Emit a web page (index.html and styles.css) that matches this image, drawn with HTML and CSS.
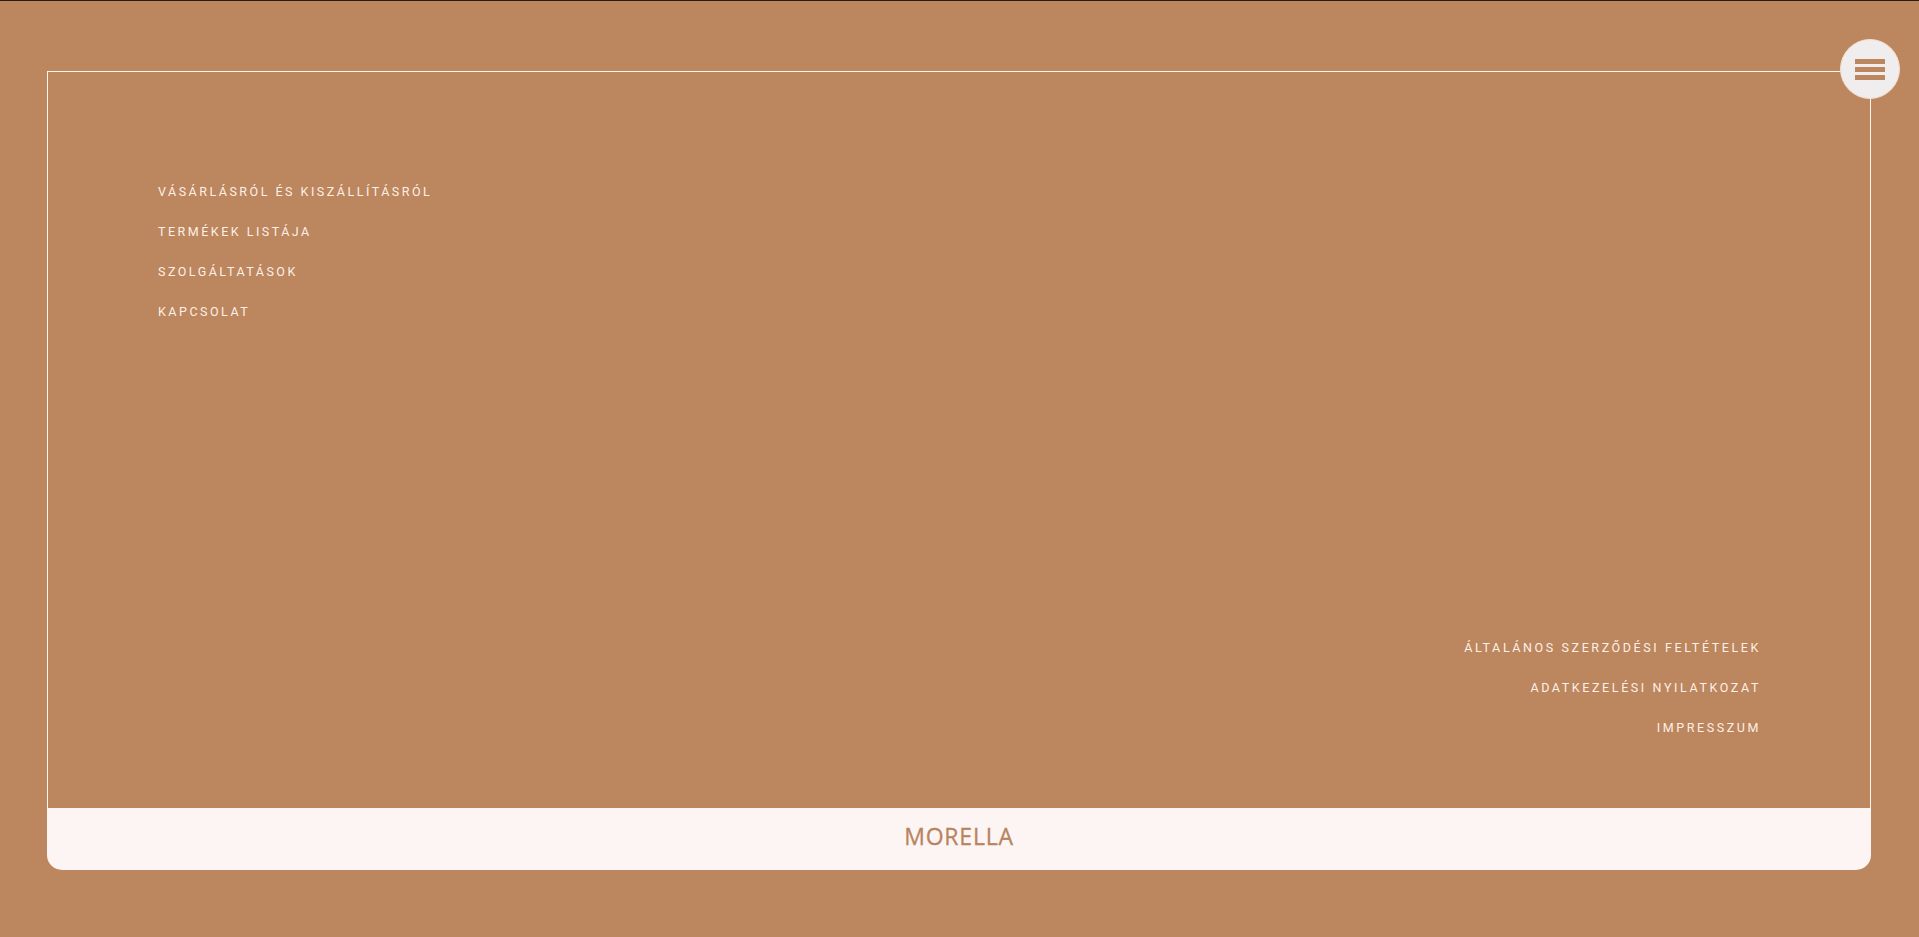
FILE: index.html
```html
<!DOCTYPE html>
<html lang="hu">
<head>
<meta charset="utf-8">
<title>Morella</title>
<link rel="stylesheet" href="styles.css">
</head>
<body>
<div class="page">
  <div class="frame">
    <div class="frame-inner">
      <nav class="menu">
        <a href="#">VÁSÁRLÁSRÓL ÉS KISZÁLLÍTÁSRÓL</a>
        <a href="#">TERMÉKEK LISTÁJA</a>
        <a href="#">SZOLGÁLTATÁSOK</a>
        <a href="#">KAPCSOLAT</a>
      </nav>
      <nav class="legal">
        <a href="#">ÁLTALÁNOS SZERZŐDÉSI FELTÉTELEK</a>
        <a href="#">ADATKEZELÉSI NYILATKOZAT</a>
        <a href="#">IMPRESSZUM</a>
      </nav>
    </div>
    <footer class="footer">MORELLA</footer>
    <button class="burger" aria-label="Menü">
      <span class="bar"></span><span class="bar"></span><span class="bar"></span>
    </button>
  </div>
</div>
</body>
</html>
```

FILE: styles.css
```css
html, body {
  margin: 0;
  padding: 0;
}
body {
  background: #bc865e;
  border-top: 1px solid #2a1a10;
  font-family: Roboto, "Liberation Sans", sans-serif;
  height: 936px;
  overflow: hidden;
}
.page {
  padding: 70px 48px 0 47px;
}
.frame {
  position: relative;
}
.frame-inner {
  border: 1px solid #fff4ee;
  border-bottom: none;
  display: flex;
  flex-direction: column;
  justify-content: space-between;
  padding: 110px 109px 70px 110px;
  box-sizing: border-box;
  height: 737px;
}
.menu, .legal {
  display: flex;
  flex-direction: column;
  gap: 20px;
}
.legal {
  align-items: flex-end;
}
.menu a, .legal a {
  color: #fdf0e6;
  text-decoration: none;
  font-size: 12.5px;
  line-height: 20px;
  letter-spacing: 2.5px;
}
.legal a {
  letter-spacing: 2.6px;
}
.footer {
  height: 62px;
  background: #fdf5f4;
  border-radius: 0 0 15px 15px;
  display: flex;
  align-items: center;
  justify-content: center;
  color: #b8845f;
  font-family: "Open Sans", sans-serif;
  font-size: 23px;
  font-weight: 500;
  letter-spacing: 0.8px;
  -webkit-text-stroke: 0.3px #b8845f;
  padding-bottom: 6px;
  box-sizing: border-box;
}
.burger {
  position: absolute;
  top: -32px;
  right: -29px;
  width: 60px;
  height: 60px;
  border-radius: 50%;
  background: #efeded;
  border: 1px solid #f6dccb;
  padding: 0;
  display: flex;
  flex-direction: column;
  align-items: center;
  justify-content: center;
  gap: 3px;
  box-sizing: border-box;
}
.bar {
  display: block;
  width: 30px;
  height: 5px;
  background: #bc865e;
}
```
